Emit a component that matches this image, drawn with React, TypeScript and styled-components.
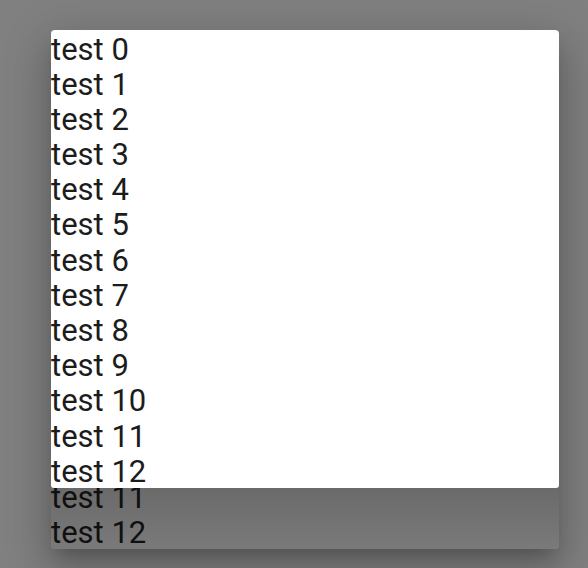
import React from "react";
import styled, { createGlobalStyle } from "styled-components";

const Global = createGlobalStyle`
  html, body { margin: 0; padding: 0; background: #808080; }
  body { font-family: Roboto, "Noto Sans", sans-serif; }
`;

const Page = styled.div`
  width: 588px;
  height: 568px;
  padding: 30px 29px 0 51px;
  box-sizing: border-box;
  overflow: hidden;
`;

const Card = styled.div`
  width: 508px;
  display: flex;
  flex-direction: column;
  border-radius: 4px;
  box-shadow: 0 11px 15px -7px rgba(0, 0, 0, 0.2),
    0 24px 38px 3px rgba(0, 0, 0, 0.14), 0 9px 46px 8px rgba(0, 0, 0, 0.12);
`;

const Panel = styled.div`
  position: relative;
  z-index: 1;
  height: 458px;
  box-sizing: border-box;
  padding-top: 1.5px;
  background: #ffffff;
  border-radius: 4px 4px 3px 3px;
  overflow: hidden;
`;

const Tail = styled.div`
  margin-top: -8px;
  height: 69px;
  background: linear-gradient(#686868, #7a7a7a);
  border-radius: 0 0 4px 4px;
`;

const Line = styled.div<{ $dim?: boolean }>`
  font-size: 31px;
  line-height: 35.2px;
  height: 35.2px;
  color: ${(p) => (p.$dim ? "#101010" : "#1c1c1c")};
  white-space: nowrap;
`;

const items = Array.from({ length: 13 }, (_, i) => `test ${i}`);

export default function App() {
  return (
    <>
      <Global />
      <Page>
        <Card>
          <Panel>
            {items.map((t) => (
              <Line key={t}>{t}</Line>
            ))}
          </Panel>
          <Tail>
            <Line $dim>test 11</Line>
            <Line $dim>test 12</Line>
          </Tail>
        </Card>
      </Page>
    </>
  );
}
